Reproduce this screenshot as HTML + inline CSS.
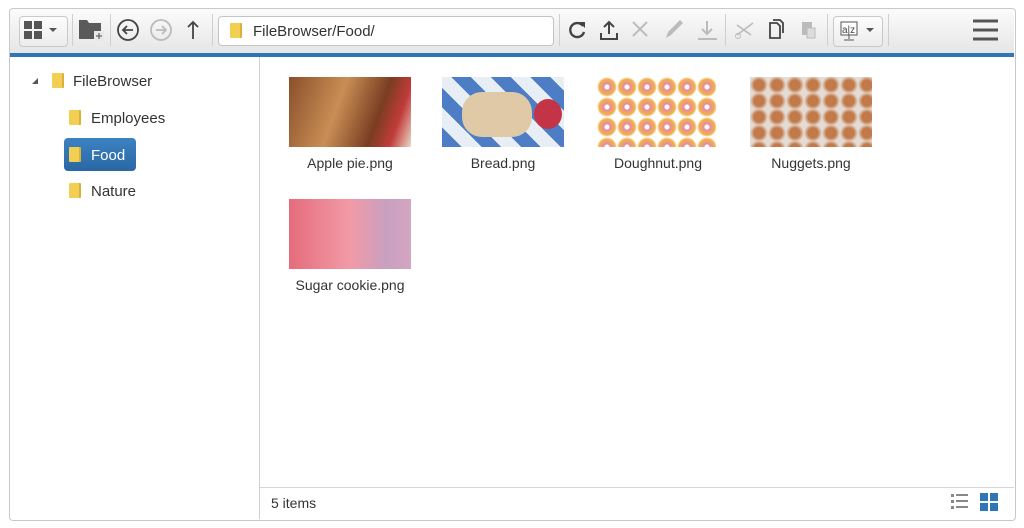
<!DOCTYPE html><html><head><style>
body{margin:0;width:1024px;height:528px;background:#fff;font-family:"Liberation Sans",sans-serif;position:relative;overflow:hidden}
.a{position:absolute}
.frame{left:9px;top:8px;width:1005px;height:511px;border:1px solid #c8c8c8;border-radius:4px}
.tb{left:10px;top:9px;width:1004px;height:44px;background:linear-gradient(#fbfbfb,#e6e6e6);border-radius:4px 4px 0 0}
.blue{left:10px;top:53px;width:1004px;height:4px;background:#2f76b6}
.sep{top:14px;width:1px;height:32px;background:#cfcfcf}
.btn{top:16px;height:29px;border:1px solid #c9c9c9;border-radius:4px;background:linear-gradient(#fdfdfd,#ececec)}
.addr{left:218px;top:16px;width:334px;height:28px;border:1px solid #c4c4c4;border-radius:4px;background:#fff;font-size:15px;color:#333}
.lp{left:259px;top:57px;width:1px;height:462px;background:#d0d0d0}
.t{font-size:15px;color:#333}
.fold{display:inline-block;width:10px;height:15px;background:#f2cf52;border-radius:1px;border-right:2px solid #d9b23a}
.th{width:122px;height:70px}
.lb{font-size:14px;color:#333;text-align:center;width:122px}
.sb{left:260px;top:487px;width:754px;height:1px;background:#d6d6d6}
</style></head><body>
<div class="a frame"></div>
<div class="a tb"></div>
<div class="a blue"></div>
<div class="a btn" style="left:19px;width:47px"></div>
<svg class="a" style="left:24px;top:21px" width="40" height="20"><rect x="0" y="0" width="8" height="8" fill="#555"/><rect x="10" y="0" width="8" height="8" fill="#555"/><rect x="0" y="10" width="8" height="8" fill="#555"/><rect x="10" y="10" width="8" height="8" fill="#555"/><path d="M25 7h8l-4 4z" fill="#555"/></svg>
<div class="a sep" style="left:72px"></div>
<svg class="a" style="left:79px;top:18px" width="26" height="24"><path d="M0 2h8l2 3h12v16H0z" fill="#5a5a5a"/><rect x="15" y="13" width="10" height="10" fill="#e9e9e9"/><path d="M20 15v6M17 18h6" stroke="#666" stroke-width="1.3"/></svg>
<div class="a sep" style="left:110px"></div>
<svg class="a" style="left:116px;top:18px" width="90" height="24"><circle cx="12" cy="12" r="10" fill="none" stroke="#444" stroke-width="1.8"/><path d="M17 12H7M11 8l-4 4 4 4" fill="none" stroke="#444" stroke-width="1.8"/><circle cx="45" cy="12" r="10" fill="none" stroke="#bbb" stroke-width="1.8"/><path d="M40 12h10M46 8l4 4-4 4" fill="none" stroke="#bbb" stroke-width="1.8"/><path d="M77 21V4M72 9l5-5 5 5" fill="none" stroke="#444" stroke-width="1.8"/></svg>
<div class="a sep" style="left:212px"></div>
<div class="a addr"><span class="fold a" style="left:11px;top:6px"></span><span class="a" style="left:34px;top:6px">FileBrowser/Food/</span></div>
<div class="a sep" style="left:559px"></div>
<svg class="a" style="left:566px;top:17px" width="160" height="26"><path d="M17 9a7 7 0 1 0 1 6" fill="none" stroke="#444" stroke-width="2.4"/><path d="M13 5h6v6z" fill="#444"/><path d="M43 17V5M38 10l5-5 5 5M35 16v6h16v-6" fill="none" stroke="#444" stroke-width="2"/><path d="M67 5l14 14M81 5L67 19" stroke="#bbb" stroke-width="2"/><path d="M100 21l2-6 12-12 3 3-12 12z" fill="#bbb"/><path d="M141 4v13M136 12l5 5 5-5M132 22h19" fill="none" stroke="#bbb" stroke-width="2"/></svg>
<div class="a sep" style="left:725px"></div>
<svg class="a" style="left:733px;top:17px" width="90" height="26"><path d="M4 18l16-12M4 8l14 10" stroke="#bbb" stroke-width="1.6" fill="none"/><circle cx="5" cy="19" r="2.5" fill="none" stroke="#bbb"/><path d="M37 6h7l3 3v12H37zM40 3h7l3 3v10" fill="none" stroke="#444" stroke-width="1.8"/><rect x="69" y="5" width="10" height="13" fill="#bbb"/><rect x="74" y="11" width="8" height="10" fill="#ddd" stroke="#bbb"/></svg>
<div class="a sep" style="left:827px"></div>
<div class="a btn" style="left:833px;width:48px"></div>
<svg class="a" style="left:839px;top:20px" width="40" height="22"><rect x="2" y="2" width="16" height="13" fill="#fff" stroke="#555"/><text x="3" y="13" font-size="10" fill="#444" font-family="Liberation Sans">a|z</text><path d="M10 15v4M5 20h10" stroke="#555"/><path d="M27 8h8l-4 4z" fill="#555"/></svg>
<div class="a sep" style="left:888px"></div>
<svg class="a" style="left:973px;top:19px" width="26" height="22"><path d="M0 2h25M0 11h25M0 20h25" stroke="#555" stroke-width="3"/></svg>
<div class="a lp"></div>
<svg class="a" style="left:31px;top:77px" width="8" height="8"><path d="M7 1v6H1z" fill="#555"/></svg>
<span class="fold a" style="left:52px;top:73px"></span><span class="a t" style="left:73px;top:73px">FileBrowser</span>
<span class="fold a" style="left:69px;top:110px"></span><span class="a t" style="left:91px;top:110px">Employees</span>
<div class="a" style="left:64px;top:138px;width:72px;height:33px;background:linear-gradient(#3c82c2,#2a67a4);border-radius:4px"></div>
<span class="fold a" style="left:69px;top:147px"></span><span class="a t" style="left:91px;top:147px;color:#fff">Food</span>
<span class="fold a" style="left:69px;top:183px"></span><span class="a t" style="left:91px;top:183px">Nature</span>
<div class="a th" style="left:289px;top:77px;background:linear-gradient(110deg,#8a4f2a,#c98e55 40%,#7a3d22 70%,#c23b3a 85%,#e8dac8)"></div>
<div class="a lb" style="left:289px;top:155px">Apple pie.png</div>
<div class="a th" style="left:442px;top:77px;background:repeating-linear-gradient(45deg,#4d7dc4 0 14px,#e8eef6 14px 28px)"><div class="a" style="left:20px;top:15px;width:70px;height:45px;background:#e0c9a6;border-radius:20px"></div><div class="a" style="left:92px;top:22px;width:28px;height:30px;background:#c33447;border-radius:50%"></div></div>
<div class="a lb" style="left:442px;top:155px">Bread.png</div>
<div class="a th" style="left:597px;top:77px;width:119px;background:radial-gradient(circle,#fff 2px,#e88aa0 3px,#f1b34a 8px,#fff 10px) 0 0/20px 20px"></div>
<div class="a lb" style="left:597px;top:155px">Doughnut.png</div>
<div class="a th" style="left:750px;top:77px;background:radial-gradient(circle,#c27a4a 5px,#e4dcd4 9px) 0 0/18px 16px"></div>
<div class="a lb" style="left:750px;top:155px">Nuggets.png</div>
<div class="a th" style="left:289px;top:199px;background:linear-gradient(90deg,#e56c7c,#f29aa6 50%,#c8a0c0 80%,#d5a5c0)"></div>
<div class="a lb" style="left:289px;top:277px">Sugar cookie.png</div>
<div class="a sb"></div>
<span class="a t" style="left:271px;top:495px;font-size:14px">5 items</span>
<svg class="a" style="left:951px;top:493px" width="50" height="20"><g fill="#888"><rect x="0" y="1" width="3" height="3"/><rect x="0" y="7" width="3" height="3"/><rect x="0" y="13" width="3" height="3"/><rect x="5" y="1" width="12" height="2"/><rect x="5" y="7" width="12" height="2"/><rect x="5" y="13" width="12" height="2"/></g><g fill="#2f76b6"><rect x="29" y="0" width="8" height="8"/><rect x="39" y="0" width="8" height="8"/><rect x="29" y="10" width="8" height="8"/><rect x="39" y="10" width="8" height="8"/></g></svg>
</body></html>
